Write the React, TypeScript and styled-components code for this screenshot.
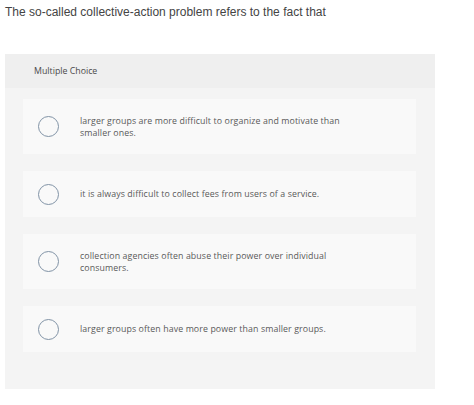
import styled, { createGlobalStyle } from "styled-components";

const GlobalStyle = createGlobalStyle`
  html, body {
    margin: 0;
    padding: 0;
    background: #ffffff;
  }
`;

const Page = styled.div`
  width: 474px;
  height: 405px;
  padding: 5px 0 0 5px;
  box-sizing: border-box;
  background: #ffffff;
`;

const Question = styled.div`
  font-family: "Liberation Sans", Arial, sans-serif;
  font-size: 12px;
  line-height: 14px;
  color: #444444;
`;

const Panel = styled.div`
  margin-top: 35px;
  width: 430px;
  height: 335px;
  background: #f4f4f4;
  display: flex;
  flex-direction: column;
`;

const PanelHeader = styled.div`
  height: 34px;
  background: #efefef;
  display: flex;
  align-items: center;
  padding-left: 29px;
  font-family: "Open Sans", "Liberation Sans", sans-serif;
  font-size: 8.8px;
  color: #4a4a4a;
`;

const OptionList = styled.div`
  display: flex;
  flex-direction: column;
  gap: 17px;
  padding: 11px 19px 0 18px;
`;

const OptionCard = styled.div<{ $tall?: boolean }>`
  height: ${({ $tall }) => ($tall ? "55px" : "46px")};
  background: #f9f9f9;
  display: flex;
  align-items: center;
`;

const Radio = styled.div`
  width: 19px;
  height: 19px;
  margin-left: 15px;
  flex-shrink: 0;
  border: 1.2px solid #8193a6;
  border-radius: 50%;
`;

const OptionText = styled.div`
  margin-left: 21px;
  width: 280px;
  font-family: "Open Sans", "Liberation Sans", sans-serif;
  font-size: 8.8px;
  letter-spacing: 0.1px;
  line-height: 12px;
  color: #5a5a5a;
`;

const options = [
  "larger groups are more difficult to organize and motivate than smaller ones.",
  "it is always difficult to collect fees from users of a service.",
  "collection agencies often abuse their power over individual consumers.",
  "larger groups often have more power than smaller groups.",
];

const App = () => {
  return (
    <Page>
      <GlobalStyle />
      <Question>The so-called collective-action problem refers to the fact that</Question>
      <Panel>
        <PanelHeader>Multiple Choice</PanelHeader>
        <OptionList>
          {options.map((text, i) => (
            <OptionCard key={i} $tall={i === 0 || i === 2}>
              <Radio />
              <OptionText>{text}</OptionText>
            </OptionCard>
          ))}
        </OptionList>
      </Panel>
    </Page>
  );
};

export default App;
